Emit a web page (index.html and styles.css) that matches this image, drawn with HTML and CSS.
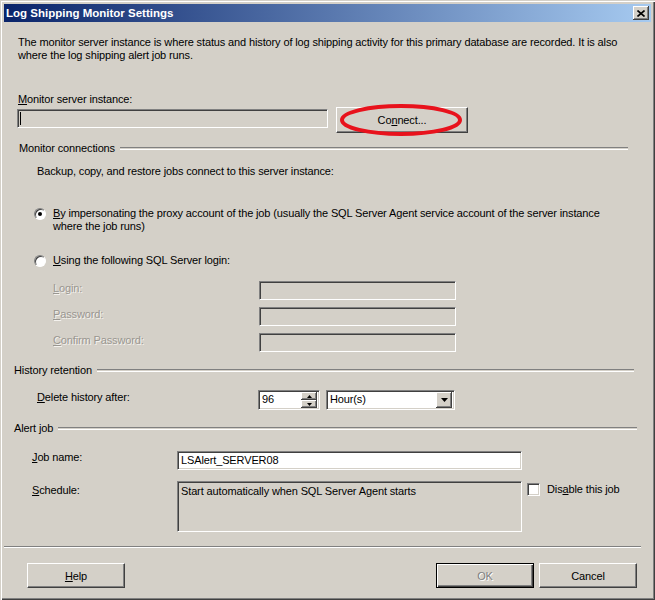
FILE: index.html
```html
<!DOCTYPE html>
<html lang="en">
<head>
    <meta charset="UTF-8">
    <title>Log Shipping Monitor Settings</title>
    <link rel="stylesheet" href="styles.css">
</head>
<body>
    <div class="window">
        <div class="titlebar">
            <span class="title">Log Shipping Monitor Settings</span>
            <div class="title-close">
                <svg width="8" height="7" viewBox="0 0 8 7"><path d="M0.5 0.5 L7.5 6.5 M7.5 0.5 L0.5 6.5" stroke="#000" stroke-width="1.6" fill="none"/></svg>
            </div>
        </div>

        <div class="dialog">
            <p class="intro">The monitor server instance is where status and history of log shipping activity for this primary database are recorded. It is also<br>where the log shipping alert job runs.</p>

            <div class="field-label"><u>M</u>onitor server instance:</div>
            <div class="server-row">
                <div class="textbox readonly server-box"><span class="caret"></span></div>
                <div class="btn connect-btn">Co<u>n</u>nect...</div>
                <svg class="highlight" width="125" height="35" viewBox="0 0 125 35">
                    <ellipse cx="62" cy="17" rx="59" ry="14" fill="none" stroke="#e8121c" stroke-width="4"/>
                </svg>
            </div>

            <div class="group-head group-connections"><span>Monitor connections</span><i class="etch"></i></div>
            <div class="note">Backup, copy, and restore jobs connect to this server instance:</div>

            <div class="radio-row first">
                <span class="radio checked"></span>
                <span><u>B</u>y impersonating the proxy account of the job (usually the SQL Server Agent service account of the server instance<br>where the job runs)</span>
            </div>
            <div class="radio-row second">
                <span class="radio"></span>
                <span><u>U</u>sing the following SQL Server login:</span>
            </div>

            <div class="login-rows">
                <div class="login-row">
                    <span class="disabled-label"><u>L</u>ogin:</span>
                    <div class="textbox readonly login-box"></div>
                </div>
                <div class="login-row">
                    <span class="disabled-label"><u>P</u>assword:</span>
                    <div class="textbox readonly login-box"></div>
                </div>
                <div class="login-row">
                    <span class="disabled-label"><u>C</u>onfirm Password:</span>
                    <div class="textbox readonly login-box"></div>
                </div>
            </div>

            <div class="group-head group-history"><span>History retention</span><i class="etch"></i></div>
            <div class="history-row">
                <span class="history-label"><u>D</u>elete history after:</span>
                <div class="textbox spinner">
                    <span class="box-text">96</span>
                    <div class="spin-buttons">
                        <div class="spin-btn"><svg width="5" height="3" viewBox="0 0 5 3"><path d="M2.5 0 L5 3 L0 3 Z" fill="#000"/></svg></div>
                        <div class="spin-btn"><svg width="5" height="3" viewBox="0 0 5 3"><path d="M0 0 L5 0 L2.5 3 Z" fill="#000"/></svg></div>
                    </div>
                </div>
                <div class="textbox combo">
                    <span class="box-text">Hour(s)</span>
                    <div class="combo-btn"><svg width="7" height="4" viewBox="0 0 7 4"><path d="M0 0 L7 0 L3.5 4 Z" fill="#000"/></svg></div>
                </div>
            </div>

            <div class="group-head group-alert"><span>Alert job</span><i class="etch"></i></div>
            <div class="job-row">
                <span class="job-label"><u>J</u>ob name:</span>
                <div class="textbox job-box"><span class="box-text">LSAlert_SERVER08</span></div>
            </div>
            <div class="schedule-row">
                <span class="job-label schedule-label"><u>S</u>chedule:</span>
                <div class="textbox readonly schedule-box"><span class="box-text">Start automatically when SQL Server Agent starts</span></div>
                <span class="checkbox"></span>
                <span class="check-label">Dis<u>a</u>ble this job</span>
            </div>
        </div>

        <div class="separator"></div>
        <div class="footer">
            <div class="btn footer-btn"><u>H</u>elp</div>
            <div class="btn footer-btn default disabled">OK</div>
            <div class="btn footer-btn cancel-btn">Cancel</div>
        </div>
    </div>
</body>
</html>
```

FILE: styles.css
```css
body {
    margin: 0;
    padding: 0;
    background-color: #d4d0c8;
    font-family: 'Liberation Sans', Arial, sans-serif;
    font-size: 11px;
    letter-spacing: -0.13px;
    color: #000;
}

.window {
    width: 655px;
    height: 600px;
    box-sizing: border-box;
    padding: 4px;
    background: #d4d0c8;
    box-shadow: inset 1px 1px 0 #d4d0c8, inset 2px 2px 0 #fff, inset -1px -1px 0 #404040, inset -2px -2px 0 #808080;
}

.titlebar {
    height: 18px;
    display: flex;
    align-items: center;
    justify-content: space-between;
    padding: 0 2px 0 2px;
    background: linear-gradient(to right, #0a246a, #a6caf0);
}

.title {
    color: white;
    font-weight: bold;
    font-size: 11.5px;
    letter-spacing: 0;
}

.title-close {
    width: 16px;
    height: 14px;
    box-sizing: border-box;
    display: flex;
    align-items: center;
    justify-content: center;
    background: #d4d0c8;
    box-shadow: inset -1px -1px 0 #404040, inset 1px 1px 0 #fff, inset -2px -2px 0 #808080;
}

.dialog {
    padding: 0 14px;
}

.intro {
    margin: 14px 0 0;
    line-height: 13px;
}

.field-label {
    margin-top: 31px;
    line-height: 13px;
}

/* classic 3d boxes */
.textbox {
    box-sizing: border-box;
    background: white;
    border: 1px solid;
    border-color: #808080 #fff #fff #808080;
    box-shadow: inset 1px 1px 0 #404040, inset -1px -1px 0 #d4d0c8;
}

.textbox.readonly {
    background: #d4d0c8;
}

.btn {
    box-sizing: border-box;
    display: flex;
    align-items: center;
    justify-content: center;
    background: #d4d0c8;
    border: 1px solid;
    border-color: #fff #404040 #404040 #fff;
    box-shadow: inset -1px -1px 0 #808080;
}

.server-row {
    position: relative;
    display: flex;
    align-items: flex-start;
    margin-top: 1px;
    height: 26px;
}

.server-box {
    width: 311px;
    height: 19px;
    margin: 2px 0 0 -1px;
    padding: 2px 0 0 2px;
}

.caret {
    display: block;
    width: 1px;
    height: 13px;
    background: #000;
}

.connect-btn {
    width: 132px;
    height: 26px;
    margin-left: 8px;
}

.highlight {
    position: absolute;
    left: 321px;
    top: -4px;
}

.group-head {
    display: flex;
    align-items: center;
    line-height: 13px;
}

.group-head .etch {
    flex: 1;
    height: 1px;
    margin-left: 5px;
    border-top: 1px solid #808080;
    border-bottom: 1px solid #fff;
}

.group-connections {
    margin: 9px 9px 0 1px;
}

.group-history {
    margin: 12px 3px 0 -4px;
}

.group-alert {
    margin: 12px 0 0 -4px;
}

.note {
    margin: 10px 0 0 19px;
    line-height: 13px;
}

.radio-row {
    display: flex;
    align-items: flex-start;
    gap: 7px;
    margin-left: 16px;
    line-height: 13px;
}

.radio-row.first {
    margin-top: 29px;
}

.radio-row.second {
    margin-top: 21px;
}

.radio {
    position: relative;
    flex: none;
    width: 12px;
    height: 12px;
    box-sizing: border-box;
    margin-top: 1px;
    border-radius: 50%;
    background: white;
    border: 1px solid;
    border-color: #808080 #fff #fff #808080;
    box-shadow: inset 1px 1px 0 #404040;
}

.radio.checked::after {
    content: '';
    position: absolute;
    left: 3px;
    top: 3px;
    width: 4px;
    height: 4px;
    border-radius: 50%;
    background: #000;
}

.login-rows {
    margin: 14px 0 0 35px;
    display: flex;
    flex-direction: column;
    gap: 7px;
}

.login-row {
    display: flex;
    align-items: flex-start;
}

.disabled-label {
    width: 206px;
    line-height: 13px;
    padding-top: 1px;
    color: #999690;
    text-shadow: 1px 1px 0 #f4f2ee;
}

.login-box {
    width: 197px;
    height: 19px;
}

.history-row {
    display: flex;
    align-items: flex-start;
    margin: 13px 0 0 19px;
}

.history-label {
    width: 221px;
    line-height: 13px;
    padding-top: 1px;
}

.box-text {
    line-height: 13px;
    padding: 2px 0 0 3px;
}

.spinner {
    display: flex;
    justify-content: space-between;
    width: 62px;
    height: 20px;
    padding: 0 2px 0 0;
}

.spin-buttons {
    display: flex;
    flex-direction: column;
    padding-top: 1px;
}

.spin-btn {
    box-sizing: border-box;
    width: 16px;
    height: 8px;
    display: flex;
    align-items: center;
    justify-content: center;
    background: #d4d0c8;
    box-shadow: inset -1px -1px 0 #404040, inset 1px 1px 0 #fff, inset -2px -2px 0 #808080;
}

.combo {
    display: flex;
    justify-content: space-between;
    width: 129px;
    height: 20px;
    margin-left: 6px;
    padding: 0 2px 0 0;
}

.combo-btn {
    box-sizing: border-box;
    width: 16px;
    height: 16px;
    margin-top: 1px;
    display: flex;
    align-items: center;
    justify-content: center;
    background: #d4d0c8;
    box-shadow: inset -1px -1px 0 #404040, inset 1px 1px 0 #fff, inset -2px -2px 0 #808080;
}

.job-row {
    display: flex;
    align-items: flex-start;
    margin: 16px 0 0 14px;
}

.job-label {
    width: 145px;
    line-height: 13px;
}

.job-box {
    width: 345px;
    height: 19px;
    display: flex;
}

.schedule-row {
    display: flex;
    align-items: flex-start;
    margin: 11px 0 0 14px;
}

.schedule-label {
    padding-top: 3px;
}

.schedule-box {
    width: 345px;
    height: 51px;
    display: flex;
    padding-top: 1px;
}

.checkbox {
    flex: none;
    width: 13px;
    height: 13px;
    box-sizing: border-box;
    margin: 2px 0 0 5px;
    background: white;
    border: 1px solid;
    border-color: #808080 #fff #fff #808080;
    box-shadow: inset 1px 1px 0 #404040, inset -1px -1px 0 #d4d0c8;
}

.check-label {
    margin: 2px 0 0 7px;
    line-height: 13px;
}

.separator {
    height: 0;
    margin: 14px 10px 0 0;
    border-top: 1px solid #808080;
    border-bottom: 1px solid #fff;
}

.footer {
    display: flex;
    margin-top: 15px;
    padding-left: 23px;
}

.footer-btn {
    width: 98px;
    height: 25px;
}

.footer-btn.default {
    margin-left: auto;
    border: 1px solid #000;
    box-shadow: inset 1px 1px 0 #fff, inset -1px -1px 0 #404040, inset -2px -2px 0 #808080;
}

.footer-btn.disabled {
    color: #808080;
    text-shadow: 1px 1px 0 #fff;
}

.cancel-btn {
    margin: 0 14px 0 5px;
}
```
